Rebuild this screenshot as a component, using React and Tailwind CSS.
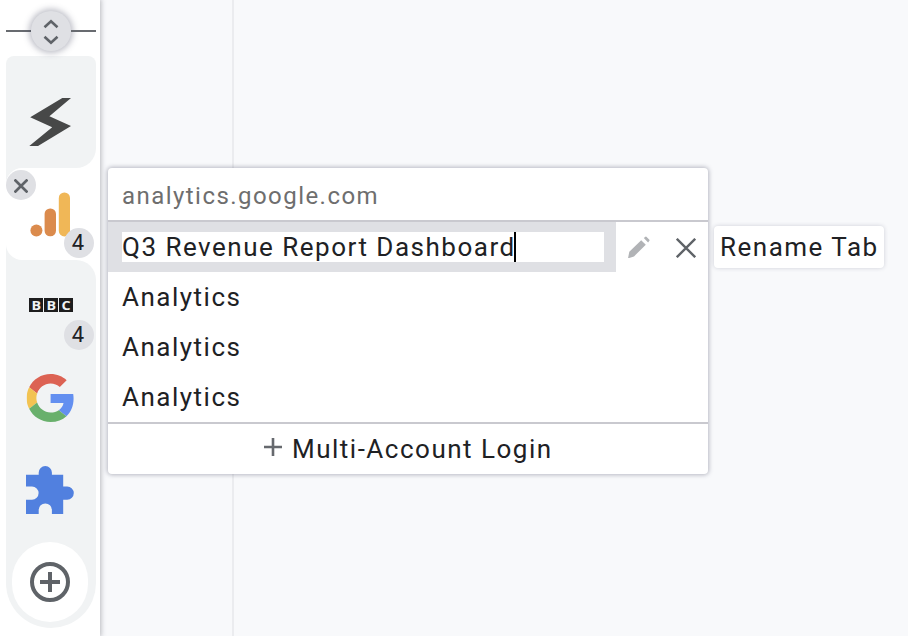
const tabs = [
  { id: 1, title: 'Analytics' },
  { id: 2, title: 'Analytics' },
  { id: 3, title: 'Analytics' },
]

function BoltIcon() {
  return (
    <svg className="w-12 h-12" viewBox="0 0 48 48" fill="#474848">
      <path d="M36.3 0H45L23.4 18.3 45 28 12 48H3.3L26.2 29.2 4.2 19.3z" />
    </svg>
  )
}

function AnalyticsIcon() {
  return (
    <svg className="w-12 h-12" viewBox="0 0 48 48">
      <circle cx="10.4" cy="40.4" r="6" fill="#db8b4d" />
      <rect x="18.6" y="18.4" width="11.4" height="27.9" rx="5.5" fill="#db8b4d" />
      <rect x="32.8" y="2.4" width="11.2" height="44" rx="5.5" fill="#f0b757" />
    </svg>
  )
}

function BbcIcon() {
  return (
    <div className="w-12 h-12 flex items-center gap-px pl-[3px] pb-0.5 text-[#f1f3f4] font-['Open_Sans',sans-serif] font-bold text-[13px] leading-[14px] tracking-normal">
      {['B', 'B', 'C'].map((c, i) => (
        <span key={i} className="w-[14px] h-[14px] bg-[#1d1d1d] text-center"><span className="inline-block scale-x-110">{c}</span></span>
      ))}
    </div>
  )
}

function GoogleIcon() {
  return (
    <svg className="w-12 h-12 translate-x-[0.6px]" viewBox="0 0 48 48">
      <path fill="#dc6253" d="M24 9.5c3.54 0 6.71 1.22 9.21 3.6l6.85-6.85C35.9 2.38 30.47 0 24 0 14.62 0 6.51 5.38 2.56 13.22l7.98 6.19C12.43 13.72 17.74 9.5 24 9.5z" />
      <path fill="#638ff0" d="M46.98 24.55c0-1.57-.15-3.09-.38-4.55H24v9.02h12.94c-.58 2.96-2.26 5.48-4.78 7.18l7.73 6c4.51-4.18 7.09-10.36 7.09-17.65z" />
      <path fill="#f2c352" d="M10.53 28.59c-.48-1.45-.76-2.99-.76-4.59s.27-3.14.76-4.59l-7.98-6.19C.92 16.46 0 20.12 0 24c0 3.88.92 7.54 2.56 10.78l7.97-6.19z" />
      <path fill="#69b06c" d="M24 48c6.48 0 11.93-2.13 15.89-5.81l-7.73-6c-2.15 1.45-4.92 2.3-8.16 2.3-6.26 0-11.57-4.22-13.47-9.91l-7.98 6.19C6.51 42.62 14.62 48 24 48z" />
    </svg>
  )
}

function PuzzleIcon() {
  return (
    <svg className="w-12 h-12" viewBox="0 0 48 48" fill="#5180df">
      <path d="M0 8.8H12.7V6.5A6.6 6.5 0 0 1 25.9 6.5V8.8H37.2V20.5H41.2A6.6 6.6 0 0 1 41.2 33.7H37.2V48H25.9V44A6.6 6.6 0 0 0 12.7 44V48H0V33.7H6A6.6 6.6 0 0 0 6 20.5H0z" />
    </svg>
  )
}

function CloseIcon({ className, strokeWidth }) {
  return (
    <svg className={className} viewBox="0 0 20 20" fill="none" stroke="currentColor" strokeWidth={strokeWidth}>
      <path d="M0.8 0.8L19.2 19.2M19.2 0.8L0.8 19.2" />
    </svg>
  )
}

function SidebarItem({ children, count, active }) {
  return (
    <div className={active ? 'relative h-[92px] pl-5 pt-[22px] bg-white rounded-l-2xl' : 'relative h-[92px] pl-5 pt-[22px]'}>
      {children}
      {active && (
        <button className="absolute left-0 top-0.5 w-[30px] h-[30px] rounded-full bg-[#dfe0e4] text-[#5f6368] flex items-center justify-center">
          <CloseIcon className="w-3.5 h-3.5 mt-0.5" strokeWidth={3.8} />
        </button>
      )}
      {count && (
        <span className="absolute right-0.5 bottom-0.5 w-[30px] h-[30px] rounded-full bg-[#dfe0e4] text-[#202124] text-[22px] leading-[30px] tracking-normal text-center pr-0.5">
          {count}
        </span>
      )}
    </div>
  )
}

function Sidebar() {
  return (
    <aside className="relative w-[100px] h-full shrink-0 bg-white px-1.5 pr-1 shadow-[0_0_5px_1px_rgba(60,64,75,0.35)]">
      {/* Collapse handle */}
      <div className="h-14 pt-[11px] flex items-start">
        <span className="w-[25px] h-0.5 mt-[19px] bg-[#686b70]" />
        <button className="w-10 h-10 rounded-full bg-[#dfe0e4] text-[#5f6368] shadow-[0_0_6px_2px_rgba(60,64,90,0.35)] flex items-center justify-center">
          <svg className="w-10 h-10" viewBox="0 0 40 40" fill="none" stroke="currentColor" strokeWidth="2.6">
            <path d="M13.5 16.2L20 10.3l6.5 5.9M13.5 25.8l6.5 5.9 6.5-5.9" />
          </svg>
        </button>
        <span className="w-[25px] h-0.5 mt-[19px] bg-[#686b70]" />
      </div>

      <div className="w-[90px]">
        <div className="pt-5 bg-[#f1f3f4] rounded-t-lg rounded-br-[20px]">
          <SidebarItem><BoltIcon /></SidebarItem>
        </div>
        <div className="bg-[linear-gradient(90deg,#f1f3f4_50%,#fff_50%)]">
          <SidebarItem active count={4}><AnalyticsIcon /></SidebarItem>
        </div>
        <div className="bg-[#f1f3f4] rounded-tr-[20px] rounded-b-[45px]">
          <SidebarItem count={4}><BbcIcon /></SidebarItem>
          <SidebarItem><GoogleIcon /></SidebarItem>
          <SidebarItem><PuzzleIcon /></SidebarItem>
          <div className="h-[92px] p-1.5 pr-2">
            <button className="w-[76px] h-20 rounded-[38px] bg-white text-[#5f6368] flex items-center justify-center">
              <svg className="w-10 h-10" viewBox="0 0 40 40" fill="none" stroke="currentColor" strokeWidth="4">
                <circle cx="20" cy="20" r="18" />
                <path d="M20 10v20M10 20h20" />
              </svg>
            </button>
          </div>
        </div>
      </div>
    </aside>
  )
}

function TabMenu() {
  return (
    <div className="absolute left-[108px] top-[168px] w-[600px] bg-white rounded-[4px] shadow-[0_0_4px_1px_rgba(60,64,90,0.35)]">
      <div className="h-[54px] px-3.5 border-b-2 border-[#c9c9cf] text-2xl leading-[56px] tracking-[1.45px] text-[#6e6e6e]">
        analytics.google.com
      </div>

      {/* Tab being renamed */}
      <div className="h-[50px] flex items-center">
        <div className="w-[508px] h-[50px] pl-3.5 pr-3 flex items-center bg-[#dfe0e4]">
          <div className="w-full h-[30px] bg-white flex items-center">
            <span className="leading-[30px] whitespace-nowrap">Q3 Revenue Report Dashboard</span>
            <span className="w-0.5 h-[30px] -ml-0.5 bg-black" />
          </div>
        </div>
        <button className="ml-3 w-[22px] h-[22px] text-[#b1b3b6]">
          <svg className="w-[22px] h-[22px]" viewBox="0 0 22 22" fill="currentColor">
            <path d="M0 22.4l1.3-6.6L13.2 4.2l4.6 4.5L6 20.4zM15.8 2l1.6-1.3q.5-.4 1 .1l3 3q.4.5 0 1l-1.3 1.6z" />
          </svg>
        </button>
        <button className="ml-[26px] w-5 h-5 mt-0.5 text-[#5f6368]">
          <CloseIcon className="w-5 h-5" strokeWidth={2.4} />
        </button>
      </div>

      {tabs.map(tab => (
        <div key={tab.id} className="h-[50px] px-3.5 leading-[50px]">{tab.title}</div>
      ))}

      <button className="w-full h-[52px] border-t-2 border-[#c9c9cf] flex items-center pl-[156px]">
        <svg className="w-[18px] h-[18px] mr-2.5 -mt-1 text-[#66696e]" viewBox="0 0 18 18" fill="none" stroke="currentColor" strokeWidth="2.6">
          <path d="M9 0v18M0 9h18" />
        </svg>
        <span className="leading-[50px] tracking-[1.5px]">Multi-Account Login</span>
      </button>
    </div>
  )
}

export default function App() {
  return (
    <div className="relative w-[908px] h-[636px] overflow-hidden flex bg-[#f8f9fb] font-[Roboto,sans-serif] text-[26px] tracking-[1.5px] text-[#202124]">
      <Sidebar />
      <div className="w-[134px] border-r-2 border-[#ebecef]" />
      <TabMenu />
      <div className="absolute left-[714px] top-[226px] w-[170px] h-[42px] pl-1.5 rounded-[4px] bg-white leading-[42px] whitespace-nowrap shadow-[0_0_4px_0_rgba(60,64,90,0.22)]">
        Rename Tab
      </div>
    </div>
  )
}
